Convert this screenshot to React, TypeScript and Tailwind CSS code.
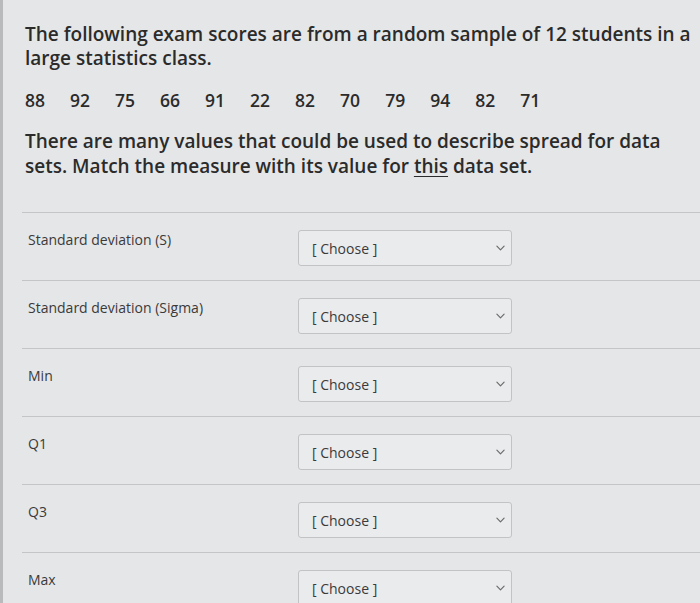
const rows = [
  "Standard deviation (S)",
  "Standard deviation (Sigma)",
  "Min",
  "Q1",
  "Q3",
  "Max",
];

const scores = [88, 92, 75, 66, 91, 22, 82, 70, 79, 94, 82, 71];

function Chevron() {
  return (
    <svg width="9" height="6" viewBox="0 0 10 6" fill="none" className="text-[#6b6b6b]">
      <path d="M1 1l4 4 4-4" stroke="currentColor" strokeWidth="1.3" strokeLinecap="round" strokeLinejoin="round" />
    </svg>
  );
}

export default function App() {
  return (
    <div
      className="h-[603px] w-[700px] overflow-hidden bg-[#e5e6e7] border-l-[3px] border-[#b9babb] text-[#2b2b2b]"
      style={{ fontFamily: '"Open Sans", "Noto Sans", sans-serif' }}
    >
      <div className="pl-[22px] pr-[8px] pt-[22px]">
        <p className="text-[19px] font-semibold leading-[24px]">
          The following exam scores are from a random sample of 12 students in a large statistics class.
        </p>
        <div className="mt-[18px] flex gap-[25px] text-[17.5px] font-semibold leading-[24px]">
          {scores.map((s, i) => (
            <span key={i}>{s}</span>
          ))}
        </div>
        <div className="mt-[17px] text-[19px] font-semibold leading-[25px]">
          <p>There are many values that could be used to describe spread for data</p>
          <p>
            sets. Match the measure with its value for <span className="underline underline-offset-[3px]">this</span> data set.
          </p>
        </div>
      </div>

      <div className="mt-[33px] pl-[19px]">
        {rows.map((label) => (
          <div key={label} className="flex h-[68px] border-t border-[#c4c5c6]">
            <div className="w-[276px] pl-[6px] pt-[17px] text-[14px] leading-[20px] text-[#3a3a3a]">{label}</div>
            <div className="pt-[17px]">
              <div className="flex h-[36px] w-[214px] items-center justify-between rounded-[3px] border border-[#c2c3c4] bg-[#eaebec] pl-[13px] pr-[6px]">
                <span className="text-[14px] text-[#3a3a3a]">[ Choose ]</span>
                <Chevron />
              </div>
            </div>
          </div>
        ))}
      </div>
    </div>
  );
}
